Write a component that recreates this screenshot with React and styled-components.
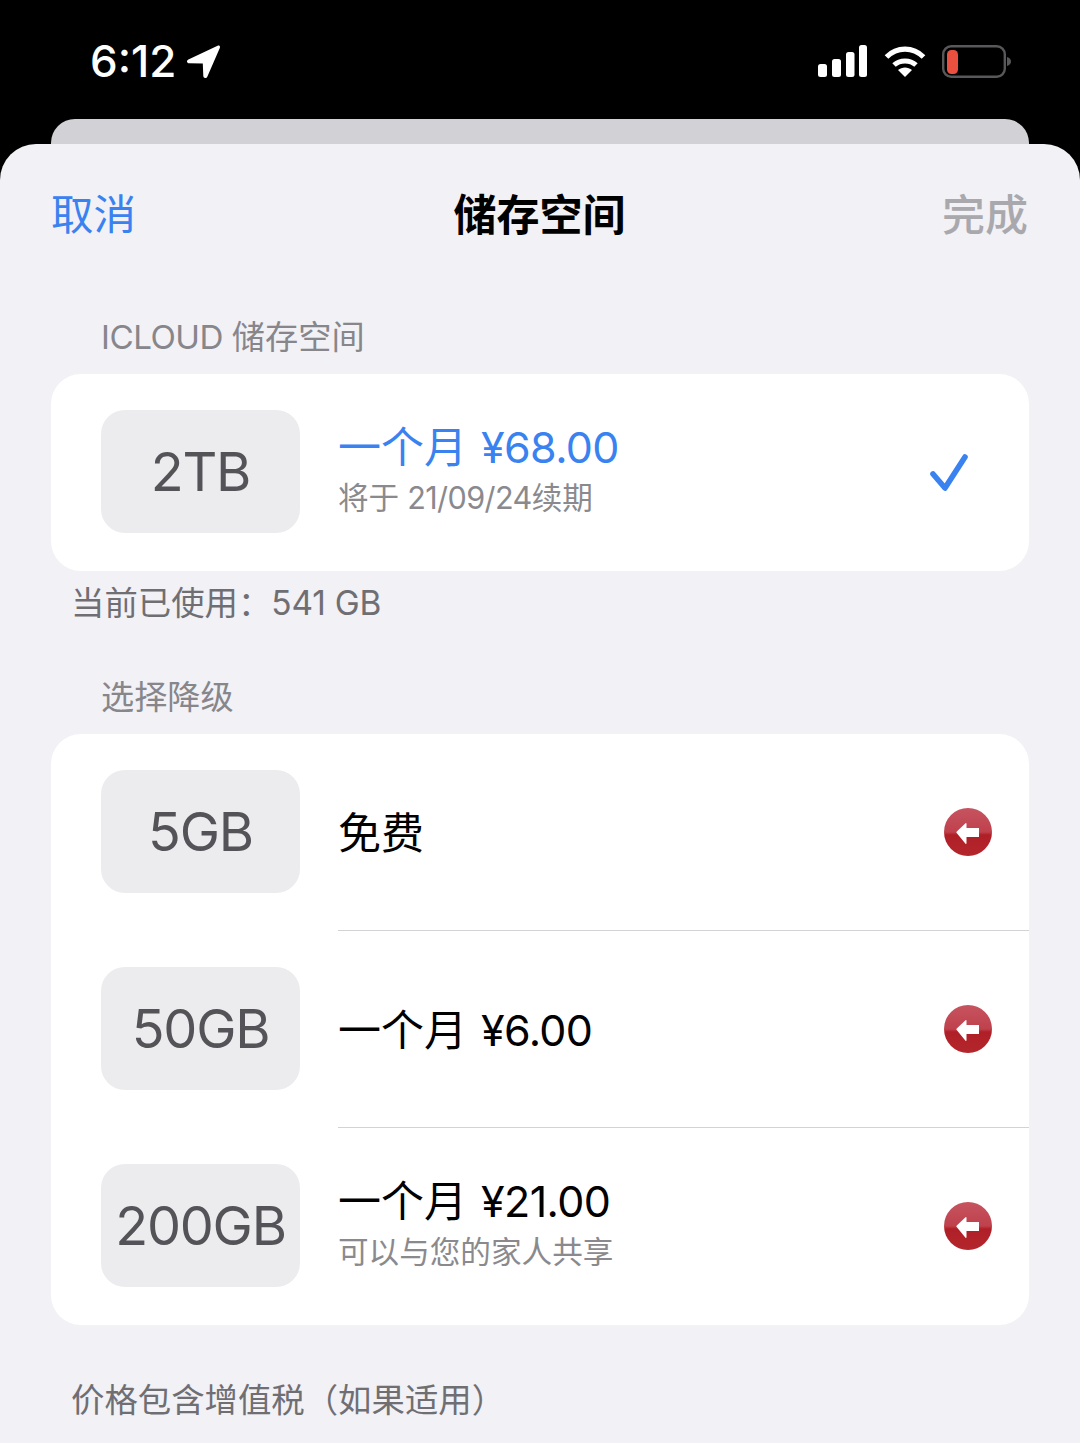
import React from "react";
import styled, { createGlobalStyle } from "styled-components";

const Global = createGlobalStyle`
  html, body { margin: 0; padding: 0; background: #000; }
  body { font-family: Inter, "Noto Sans CJK SC", sans-serif; }
`;
const Page = styled.div`
  width: 1080px; height: 1443px; background: #000; display: flex; flex-direction: column; overflow: hidden;
`;
const StatusBar = styled.div`
  height: 119px; flex: none; display: flex; align-items: flex-start; justify-content: space-between;
  padding: 44px 69px 0 90px; box-sizing: border-box; color: #fff;
`;
const TimeGroup = styled.div`display: flex; align-items: center; gap: 11px; height: 34px;`;
const Time = styled.span`font-size: 44px; font-weight: 500; line-height: 34px;`;
const StatusIcons = styled.div`display: flex; align-items: center; gap: 16px; height: 34px;`;
const BehindCard = styled.div`
  height: 25px; flex: none; margin: 0 51px; background: #d1d1d6; border-radius: 24px 24px 0 0;
`;
const Sheet = styled.div`
  flex: 1; background: #f2f1f6; border-radius: 36px 36px 0 0; display: flex; flex-direction: column;
`;
const NavBar = styled.div`
  display: grid; grid-template-columns: 1fr auto 1fr; align-items: center; height: 142px; padding: 0 52px 0 51px; box-sizing: border-box;
`;
const NavButton = styled.span`
  font-size: ${p => p.$muted ? 43 : 42.5}px; color: ${p => p.$muted ? "#a9a9ad" : "#3a82f0"}; font-weight: ${p => p.$muted ? 500 : 400};
  text-align: ${p => p.$right ? "right" : "left"}; line-height: 58px;
`;
const NavTitle = styled.span`font-size: 43px; font-weight: 700; color: #000; line-height: 58px;`;
const SectionLabel = styled.div`
  font-size: 33.2px; line-height: 44px; color: #86868b; padding-left: 101px; margin-top: ${p => p.$top}px; height: 44px;
`;
const Latin = styled.span`letter-spacing: ${p => p.$ls}px;`;
const Group = styled.div`
  margin: 15px 51px 0; background: #fff; border-radius: 30px; overflow: hidden;
`;
const Row = styled.div`
  height: 197px; display: flex; align-items: flex-start; padding-left: 50px;
`;
const Tile = styled.div`
  width: 199px; height: 123px; flex: none; margin-top: 36px; border-radius: 24px; background: #ecebee; color: #545458;
  display: flex; align-items: center; justify-content: center; font-size: 54px; letter-spacing: -1.2px;
`;
const RowBody = styled.div`
  flex: 1; align-self: stretch; margin-left: 38px; display: flex; align-items: center; justify-content: space-between;
  box-shadow: ${p => p.$line ? "inset 0 -1px 0 #d3d3d6" : "none"};
`;
const Texts = styled.div`display: flex; flex-direction: column;`;
const Title = styled.div`
  font-size: 43px; line-height: 54px; word-spacing: 2.5px; color: ${p => p.$blue ? "#3a82f0" : "#000"};
`;
const Subtitle = styled.div`font-size: 30.6px; line-height: 44px; color: #8a8a8e; margin: 2px 0 6px;`;
const Trail = styled.div`
  width: 122px; box-sizing: border-box; flex: none; display: flex; align-items: center; justify-content: center;
  margin-bottom: 1px; padding-right: ${p => p.$inset || 0}px;
`;
const Note = styled.div`
  font-size: 33.4px; line-height: 44px; color: #6f6f73; padding-left: 71px; margin-top: ${p => p.$top}px;
`;

const LocationIcon = () => (
  <svg width="33" height="33" viewBox="0 0 33 33">
    <path d="M30.6 .8 C32.4 .1 33.4 1.3 32.8 3 L20.4 31.4 C19.3 33.8 16.6 33.4 16.3 31 L15.8 18.5 L2.2 18.3 C-.4 18.2 -.8 15.4 1.4 14.4 Z" fill="#fff" />
  </svg>
);
const SignalIcon = () => (
  <svg width="50" height="32" viewBox="0 0 50 32" fill="#fff">
    <rect x="0" y="19" width="9" height="13" rx="2.5" />
    <rect x="14" y="14" width="9" height="18" rx="2.5" />
    <rect x="28" y="7" width="8.5" height="25" rx="2.5" />
    <rect x="41" y="0" width="8" height="32" rx="2.5" />
  </svg>
);
const WifiIcon = () => (
  <svg width="42" height="32" viewBox="0 0 42 32" fill="none">
    <path d="M2.5 12 C13 1.5 29 1.5 39.5 12" stroke="#fff" strokeWidth="5.2" strokeLinecap="butt" />
    <path d="M10 20 C16 14.5 26 14.5 32 20" stroke="#fff" strokeWidth="5" />
    <path d="M21 32 L14 25 C18 21.6 24 21.6 28 25 Z" fill="#fff" />
  </svg>
);
const BatteryIcon = () => (
  <svg width="69" height="33" viewBox="0 0 69 33">
    <rect x="1.2" y="1.2" width="61.6" height="30.6" rx="8" fill="none" stroke="#58585a" strokeWidth="2.4" />
    <rect x="5" y="5" width="11" height="24" rx="4.5" fill="#e9503f" />
    <path d="M65 12 C67.6 12.6 69 14.3 69 16.5 C69 18.7 67.6 20.4 65 21 Z" fill="#58585a" />
  </svg>
);
const CheckIcon = () => (
  <svg width="40" height="40" viewBox="0 0 40 40" fill="none">
    <path d="M4 22 L16 36 L36 5" stroke="#3a82f0" strokeWidth="5.6" strokeLinecap="round" strokeLinejoin="round" />
  </svg>
);
const DowngradeIcon = ({ id }) => (
  <svg width="48" height="48" viewBox="0 0 48 48">
    <defs>
      <linearGradient id={id} x1="0" y1="0" x2="0" y2="1">
        <stop offset="0" stopColor="#c65460" />
        <stop offset="0.5" stopColor="#bf414c" />
        <stop offset="0.56" stopColor="#b01f27" />
        <stop offset="1" stopColor="#b3262c" />
      </linearGradient>
    </defs>
    <circle cx="24" cy="24" r="24" fill={`url(#${id})`} />
    <path d="M12.5 24.8 Q12 24 12.8 23.4 L21.5 15.2 Q22.5 14.6 22.5 16 L22.5 20 L35 20 L35 29 L22.5 29 L22.5 35 Q22.5 36.4 21.5 35.8 Z" fill="#fff" />
  </svg>
);

const plans = [
  { size: "5GB", plain: "免费", line: true },
  { size: "50GB", plain: "一个月", price: " ¥6.00", line: true },
  { size: "200GB", plain: "一个月", price: " ¥21.00", sub: "可以与您的家人共享" },
];

export default function App() {
  return (
    <Page>
      <Global />
      <StatusBar>
        <TimeGroup>
          <Time>6:12</Time>
          <LocationIcon />
        </TimeGroup>
        <StatusIcons>
          <SignalIcon />
          <WifiIcon />
          <BatteryIcon />
        </StatusIcons>
      </StatusBar>
      <BehindCard />
      <Sheet>
        <NavBar>
          <NavButton>取消</NavButton>
          <NavTitle>储存空间</NavTitle>
          <NavButton $muted $right>完成</NavButton>
        </NavBar>
        <SectionLabel $top={29}><Latin $ls={-0.5}>ICLOUD </Latin>储存空间</SectionLabel>
        <Group>
          <Row>
            <Tile>2TB</Tile>
            <RowBody>
              <Texts>
                <Title $blue>一个月<Latin $ls={-0.6}> ¥68.00</Latin></Title>
                <Subtitle>将于<Latin $ls={-0.6}> 21/09/24</Latin>续期</Subtitle>
              </Texts>
              <Trail $inset={38}><CheckIcon /></Trail>
            </RowBody>
          </Row>
        </Group>
        <Note $top={10}>当前已使用：<Latin $ls={-0.2}>541 GB</Latin></Note>
        <SectionLabel $top={50}>选择降级</SectionLabel>
        <Group>
          {plans.map((p, i) => (
            <Row key={p.size}>
              <Tile>{p.size}</Tile>
              <RowBody $line={p.line}>
                <Texts>
                  <Title>{p.plain}{p.price && <Latin $ls={-0.6}>{p.price}</Latin>}</Title>
                  {p.sub && <Subtitle>{p.sub}</Subtitle>}
                </Texts>
                <Trail><DowngradeIcon id={`dg${i}`} /></Trail>
              </RowBody>
            </Row>
          ))}
        </Group>
        <Note $top={53}>价格包含增值税（如果适用）</Note>
      </Sheet>
    </Page>
  );
}
